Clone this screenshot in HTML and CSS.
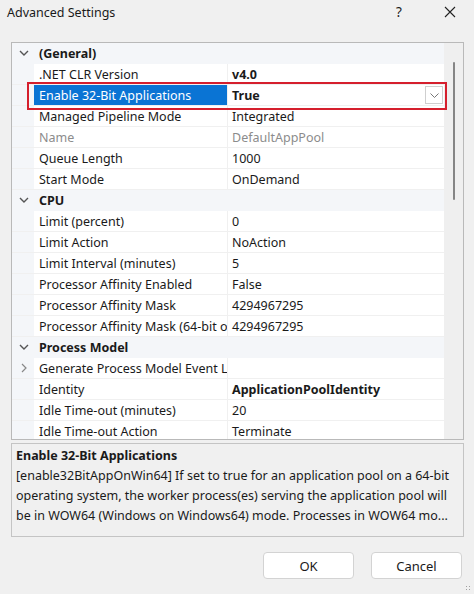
FILE: index.html
```html
<!DOCTYPE html>
<html lang="en">
<head>
    <meta charset="UTF-8">
    <title>Advanced Settings</title>
    <link rel="stylesheet" href="styles.css">
</head>
<body>
<div class="dialog">
    <div class="titlebar">
        <span class="title">Advanced Settings</span>
        <span class="help">?</span>
        <span class="close">
            <svg width="12" height="12" viewBox="0 0 12 12"><path d="M1 1 L11 11 M11 1 L1 11" stroke="#222" stroke-width="1.1" fill="none"/></svg>
        </span>
    </div>

    <div class="grid">
        <div class="rows">
            <div class="row cat">
                <span class="gutter"><svg width="10" height="6" viewBox="0 0 10 6"><path d="M1 1 L5 5 L9 1" stroke="#555" stroke-width="1.4" fill="none"/></svg></span>
                <span class="label">(General)</span>
            </div>
            <div class="row"><span class="gutter"></span><span class="label">.NET CLR Version</span><span class="value bold">v4.0</span></div>
            <div class="row selected">
                <span class="gutter"></span>
                <span class="label">Enable 32-Bit Applications</span>
                <span class="value bold">True
                    <span class="dropbtn"><svg width="9" height="5" viewBox="0 0 9 5"><path d="M0.5 0.5 L4.5 4.5 L8.5 0.5" stroke="#777" stroke-width="1" fill="none"/></svg></span>
                </span>
                <div class="marker"></div>
            </div>
            <div class="row"><span class="gutter"></span><span class="label">Managed Pipeline Mode</span><span class="value">Integrated</span></div>
            <div class="row disabled"><span class="gutter"></span><span class="label">Name</span><span class="value">DefaultAppPool</span></div>
            <div class="row"><span class="gutter"></span><span class="label">Queue Length</span><span class="value">1000</span></div>
            <div class="row"><span class="gutter"></span><span class="label">Start Mode</span><span class="value">OnDemand</span></div>

            <div class="row cat">
                <span class="gutter"><svg width="10" height="6" viewBox="0 0 10 6"><path d="M1 1 L5 5 L9 1" stroke="#555" stroke-width="1.4" fill="none"/></svg></span>
                <span class="label">CPU</span>
            </div>
            <div class="row"><span class="gutter"></span><span class="label">Limit (percent)</span><span class="value">0</span></div>
            <div class="row"><span class="gutter"></span><span class="label">Limit Action</span><span class="value">NoAction</span></div>
            <div class="row"><span class="gutter"></span><span class="label">Limit Interval (minutes)</span><span class="value">5</span></div>
            <div class="row"><span class="gutter"></span><span class="label">Processor Affinity Enabled</span><span class="value">False</span></div>
            <div class="row"><span class="gutter"></span><span class="label">Processor Affinity Mask</span><span class="value">4294967295</span></div>
            <div class="row"><span class="gutter"></span><span class="label"><span class="clip">Processor Affinity Mask (64-bit option)</span></span><span class="value">4294967295</span></div>

            <div class="row cat">
                <span class="gutter"><svg width="10" height="6" viewBox="0 0 10 6"><path d="M1 1 L5 5 L9 1" stroke="#555" stroke-width="1.4" fill="none"/></svg></span>
                <span class="label">Process Model</span>
            </div>
            <div class="row">
                <span class="gutter"><svg width="6" height="10" viewBox="0 0 6 10"><path d="M1 1 L5 5 L1 9" stroke="#888" stroke-width="1.2" fill="none"/></svg></span>
                <span class="label"><span class="clip">Generate Process Model Event Log Entry</span></span><span class="value"></span>
            </div>
            <div class="row"><span class="gutter"></span><span class="label">Identity</span><span class="value bold">ApplicationPoolIdentity</span></div>
            <div class="row"><span class="gutter"></span><span class="label">Idle Time-out (minutes)</span><span class="value">20</span></div>
            <div class="row"><span class="gutter"></span><span class="label">Idle Time-out Action</span><span class="value">Terminate</span></div>
        </div>
        <div class="scrollbar"><div class="thumb"></div></div>
    </div>

    <div class="desc">
        <div class="desc-title">Enable 32-Bit Applications</div>
        <div class="desc-text">[enable32BitAppOnWin64] If set to true for an application pool on a 64-bit operating system, the worker process(es) serving the application pool will be in WOW64 (Windows on Windows64) mode. Processes in WOW64 mo...</div>
    </div>

    <div class="buttons">
        <button class="btn">OK</button>
        <button class="btn">Cancel</button>
    </div>
    <div class="grip"></div>
</div>
</body>
</html>
```

FILE: styles.css
```css
body {
    margin: 0;
    background: #f0f0f0;
    font-family: "Noto Sans", "Open Sans", sans-serif;
    font-size: 12.5px;
    color: #1a1a1a;
}
.dialog {
    width: 474px;
    height: 594px;
    position: relative;
    display: flex;
    flex-direction: column;
    overflow: hidden;
}
.titlebar {
    height: 24px;
    display: flex;
    align-items: center;
    padding-left: 7px;
}
.title {
    flex: 1;
    font-size: 12.5px;
}
.help {
    font-size: 13.5px;
    width: 20px;
    margin-right: 35px;
    text-align: center;
}
.close {
    width: 14px;
    margin-right: 16px;
    display: flex;
    align-items: center;
}
.grid {
    margin: 18px 0 0 11px;
    width: 451px;
    height: 396px;
    border: 1px solid #b9b9b9;
    background: #ffffff;
    display: flex;
    overflow: hidden;
    flex-shrink: 0;
}
.rows {
    width: 432px;
    flex-shrink: 0;
}
.row {
    height: 20px;
    border-bottom: 1px solid #f0f0f0;
    display: flex;
    align-items: stretch;
    position: relative;
    white-space: nowrap;
}
.gutter {
    width: 22px;
    flex-shrink: 0;
    background: #f4f6f9;
    display: flex;
    align-items: center;
    justify-content: center;
    padding-left: 2px;
    box-sizing: border-box;
}
.label {
    width: 194px;
    flex-shrink: 0;
    padding-left: 5px;
    box-sizing: border-box;
    overflow: hidden;
    display: flex;
    align-items: center;
    border-right: 1px solid #f0f0f0;
}
.clip {
    display: block;
    width: 188px;
    overflow: hidden;
}
.value {
    flex: 1;
    padding-left: 4px;
    display: flex;
    align-items: center;
}
.bold {
    font-weight: bold;
}
.cat {
    background: #f4f6f9;
    border-bottom-color: #f4f6f9;
}
.cat .label {
    font-weight: bold;
    border-right: none;
}
.disabled {
    color: #8c8c8c;
}
.selected {
    z-index: 5;
}
.selected .label {
    background: #0a74d4;
    color: #ffffff;
}
.dropbtn {
    margin-left: auto;
    margin-right: 1px;
    width: 16px;
    height: 16px;
    border: 1px solid #cfcfcf;
    background: #fff;
    display: flex;
    align-items: center;
    justify-content: center;
}
.marker {
    position: absolute;
    left: 15px;
    right: -3px;
    top: -3px;
    bottom: -5px;
    border: 2.5px solid #d51f2d;
    z-index: 5;
}
.scrollbar {
    flex: 1;
    background: #efefef;
    position: relative;
}
.thumb {
    position: absolute;
    left: 9px;
    top: 19px;
    width: 2px;
    height: 138px;
    background: #858585;
    border-radius: 1px;
}
.desc {
    margin: 3px 0 0 11px;
    height: 90px;
    border: 1px solid #c4c4c4;
    padding: 2px 4px 0 4px;
    width: 443px;
    line-height: 20px;
    flex-shrink: 0;
}
.desc-title {
    font-weight: bold;
}
.buttons {
    display: flex;
    justify-content: flex-end;
    gap: 17px;
    padding-right: 12px;
    margin-top: 15px;
}
.btn {
    width: 91px;
    height: 27px;
    background: #ffffff;
    border: 1px solid #d3d3d3;
    border-radius: 4px;
    font-family: inherit;
    font-size: 13px;
    color: #1a1a1a;
}
.grip {
    position: absolute;
    right: 3px;
    bottom: 3px;
    width: 6px;
    height: 6px;
    background: radial-gradient(circle, #a0a0a0 0.8px, transparent 1px) 0 0 / 3px 3px;
}
```
